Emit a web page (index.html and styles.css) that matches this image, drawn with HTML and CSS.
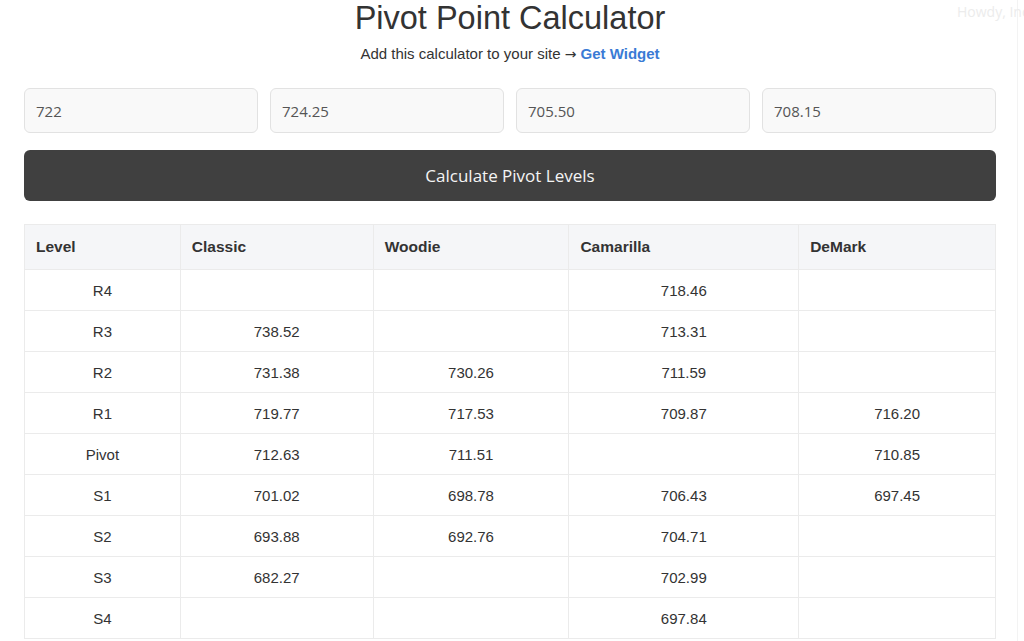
FILE: index.html
```html
<!DOCTYPE html>
<html>
<head>
<meta charset="utf-8">
<link rel="stylesheet" href="styles.css">
</head>
<body>
<div class="page">
  <div class="howdy">Howdy, Inc</div>
  <h1 class="title">Pivot Point Calculator</h1>
  <p class="subtitle">Add this calculator to your site <span class="arrow">→</span> <a class="widget-link">Get Widget</a></p>
  <div class="inputs">
    <div class="field">722</div>
    <div class="field">724.25</div>
    <div class="field">705.50</div>
    <div class="field">708.15</div>
  </div>
  <button class="calc-btn">Calculate Pivot Levels</button>
  <table class="levels">
    <colgroup>
      <col class="c-level"><col class="c-classic"><col class="c-woodie"><col class="c-cam"><col class="c-demark">
    </colgroup>
    <thead>
      <tr><th>Level</th><th>Classic</th><th>Woodie</th><th>Camarilla</th><th>DeMark</th></tr>
    </thead>
    <tbody>
      <tr><td>R4</td><td></td><td></td><td>718.46</td><td></td></tr>
      <tr><td>R3</td><td>738.52</td><td></td><td>713.31</td><td></td></tr>
      <tr><td>R2</td><td>731.38</td><td>730.26</td><td>711.59</td><td></td></tr>
      <tr><td>R1</td><td>719.77</td><td>717.53</td><td>709.87</td><td>716.20</td></tr>
      <tr><td>Pivot</td><td>712.63</td><td>711.51</td><td></td><td>710.85</td></tr>
      <tr><td>S1</td><td>701.02</td><td>698.78</td><td>706.43</td><td>697.45</td></tr>
      <tr><td>S2</td><td>693.88</td><td>692.76</td><td>704.71</td><td></td></tr>
      <tr><td>S3</td><td>682.27</td><td></td><td>702.99</td><td></td></tr>
      <tr><td>S4</td><td></td><td></td><td>697.84</td><td></td></tr>
    </tbody>
  </table>
</div>
</body>
</html>
```

FILE: styles.css
```css
html, body {
  margin: 0;
  padding: 0;
  background: #ffffff;
}
body {
  font-family: "Liberation Sans", Arial, sans-serif;
  color: #333333;
}
.page {
  position: relative;
  width: 1018px;
  min-height: 641px;
  border-right: 1px solid #f3f3f3;
  box-sizing: border-box;
  padding: 0 21px 0 24px;
}
.howdy {
  position: absolute;
  top: 2px;
  left: 957px;
  font-family: "Open Sans", sans-serif;
  font-size: 14px;
  color: #ececec;
  white-space: nowrap;
}
.title {
  margin: 0;
  font-size: 32.5px;
  font-weight: normal;
  line-height: 37px;
  text-align: center;
  color: #333333;
}
.subtitle {
  margin: 7px 0 0;
  font-size: 15px;
  line-height: 20px;
  text-align: center;
  color: #333333;
}
.arrow {
  font-family: "DejaVu Sans", sans-serif;
  font-size: 14px;
}
.widget-link {
  color: #3a7bd5;
  font-weight: bold;
}
.inputs {
  display: grid;
  grid-template-columns: repeat(4, 1fr);
  gap: 12px;
  margin-top: 24px;
}
.field {
  height: 45px;
  box-sizing: border-box;
  border: 1px solid #e2e2e2;
  border-radius: 6px;
  background: #f9f9f9;
  padding: 0 11px;
  display: flex;
  align-items: center;
  font-family: "Open Sans", sans-serif;
  font-size: 15px;
  color: #555555;
}
.calc-btn {
  display: block;
  width: 100%;
  height: 51px;
  margin-top: 17px;
  border: none;
  border-radius: 6px;
  background: #404040;
  color: #f4f4f4;
  font-family: "Open Sans", sans-serif;
  font-size: 17px;
  cursor: pointer;
}
.levels {
  width: 100%;
  margin-top: 23px;
  border-collapse: collapse;
  font-size: 15px;
  color: #333333;
}
.c-level { width: 156px; }
.c-classic { width: 193px; }
.c-woodie { width: 196px; }
.c-cam { width: 230px; }
.c-demark { width: 197px; }
.levels th, .levels td {
  border: 1px solid #ebebeb;
  height: 41px;
  padding: 0 11px;
  box-sizing: border-box;
}
.levels th {
  background: #f5f6f8;
  text-align: left;
  font-weight: bold;
  font-size: 15.5px;
  height: 45px;
}
.levels td {
  text-align: center;
}
```
